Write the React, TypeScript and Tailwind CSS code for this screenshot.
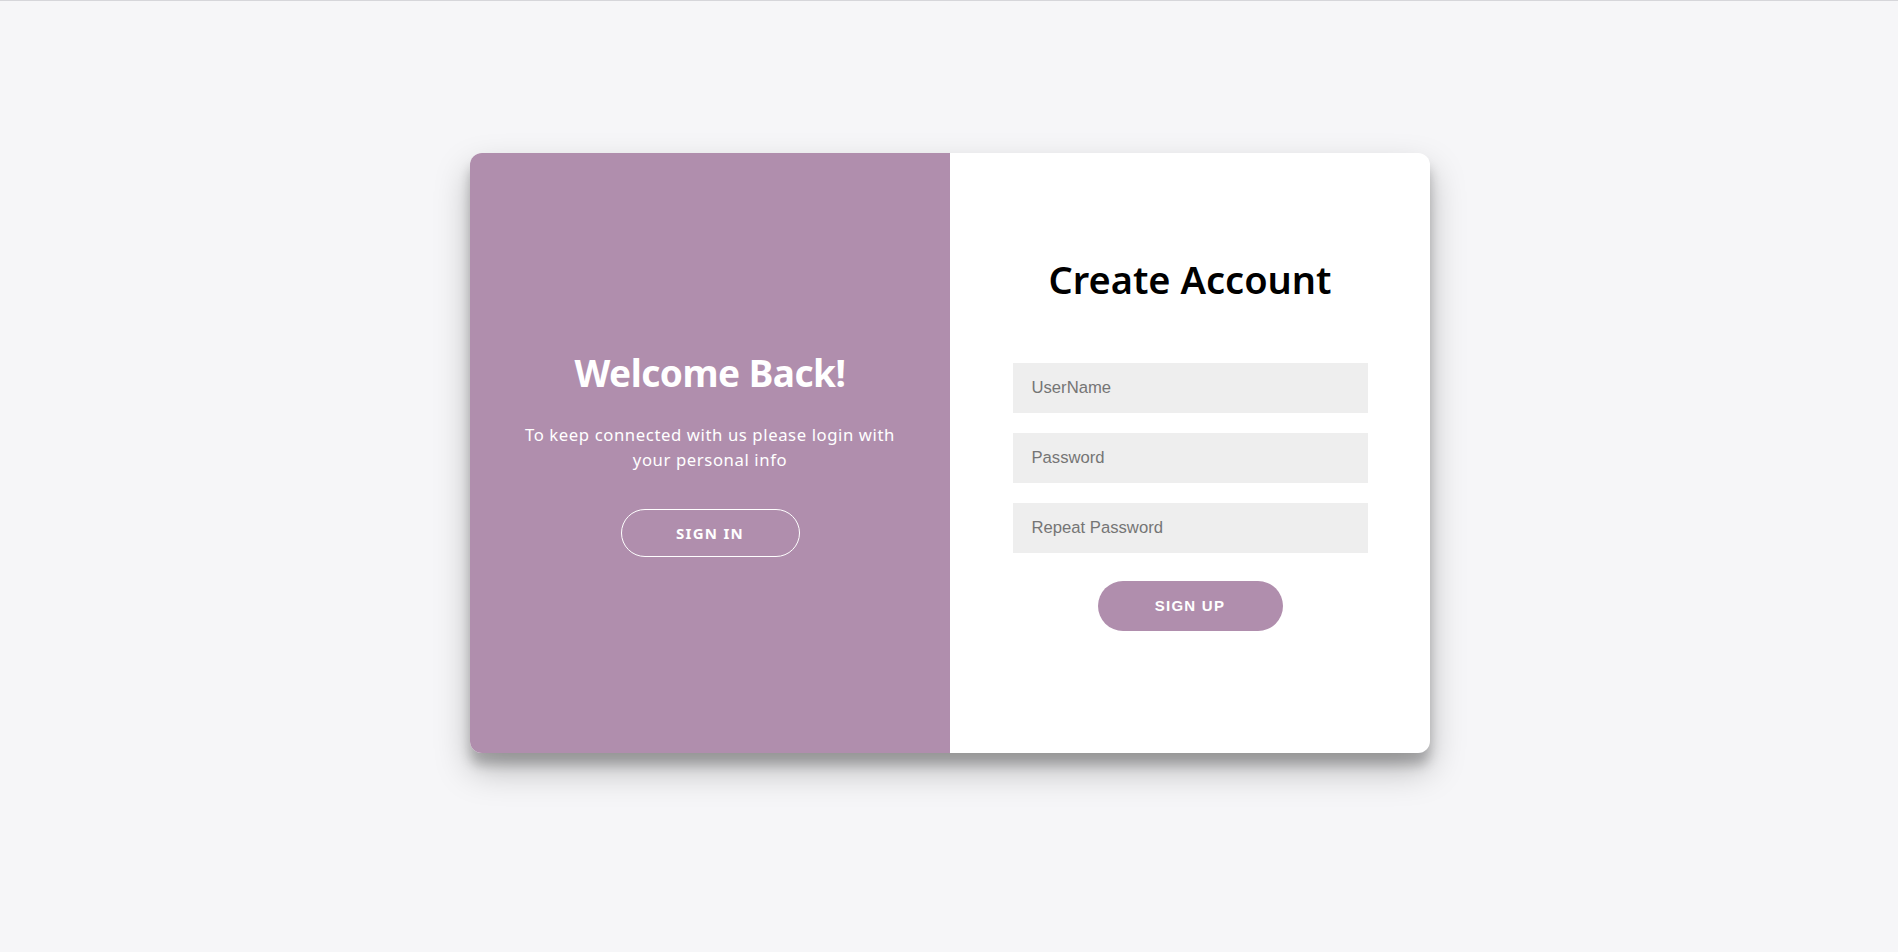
import React from "react";

const display = { fontFamily: '"Noto Sans", "Open Sans", sans-serif' };
const control = { fontFamily: '"Liberation Sans", Arial, sans-serif' };

function Field({ placeholder, type = "text" }: { placeholder: string; type?: string }) {
  return (
    <input
      type={type}
      placeholder={placeholder}
      style={control}
      className="h-[50px] w-[355px] bg-[#eeeeee] px-[19px] text-[16.67px] text-[#333] outline-none placeholder:text-[#757575]"
    />
  );
}

export default function App() {
  return (
    <div className="min-h-screen border-t border-[#d6d6da] bg-[#f6f6f8]" style={display}>
      <div className="flex justify-center pt-[152px] pb-[198px] pl-[2px]">
        <div className="flex h-[600px] w-[960px] overflow-hidden rounded-[12px] bg-white shadow-[0_17px_35px_rgba(0,0,0,0.25),0_12px_12px_rgba(0,0,0,0.22)]">
          {/* left: sign in prompt */}
          <div className="flex w-[480px] flex-col items-center justify-center bg-[#b08ead] px-[50px] text-center text-white">
            <h1 className="text-[37px] font-bold leading-[48px] tracking-[-0.5px]">Welcome Back!</h1>
            <p className="mt-[25px] mb-[37px] w-[390px] text-[16.7px] leading-[25px] tracking-[0.6px]">
              To keep connected with us please login with your personal info
            </p>
            <button className="h-[48px] w-[179px] rounded-full border border-white text-[15px] font-bold uppercase tracking-[1.25px]">
              Sign In
            </button>
          </div>

          {/* right: sign up form */}
          <form className="flex w-[480px] flex-col items-center justify-center pb-[20px]">
            <h1 className="text-[38px] font-semibold leading-[48px] text-black">Create Account</h1>
            <div className="mt-[60px] flex flex-col gap-[20px]">
              <Field placeholder="UserName" />
              <Field placeholder="Password" type="password" />
              <Field placeholder="Repeat Password" type="password" />
            </div>
            <button
              type="button"
              style={control}
              className="mt-[28px] h-[50px] w-[185px] rounded-full bg-[#b08ead] text-[15px] font-bold uppercase tracking-[1.25px] text-white"
            >
              Sign Up
            </button>
          </form>
        </div>
      </div>
    </div>
  );
}
